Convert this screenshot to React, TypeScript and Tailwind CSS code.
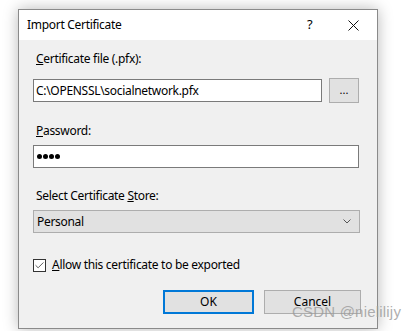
import { Check } from 'lucide-react';

const font = { fontFamily: '"Noto Sans", "Open Sans", sans-serif' };

function Label({ children }: { children: React.ReactNode }) {
  return <div className="h-4 leading-4 text-[12px] tracking-[-0.3px] text-black">{children}</div>;
}

export default function App() {
  return (
    <div className="relative w-[408px] h-[331px] bg-white overflow-hidden" style={font}>
      {/* dialog */}
      <div className="ml-[18px] mt-[9px] w-[360px] h-[320px] border border-[#8a8a8a] shadow-[0_0_14px_rgba(0,0,0,0.28)] flex flex-col bg-[#f0f0f0]">
        {/* title bar */}
        <div className="h-[30px] bg-white flex items-center pl-[8px] shrink-0">
          <span className="text-[12px] tracking-[-0.3px] text-black flex-1">Import Certificate</span>
          <span className="text-[13px] text-black w-[10px] mr-[31px]">?</span>
          <svg width="11" height="11" viewBox="0 0 11 11" className="mr-[18px]">
            <path d="M0.5 0.5 L10.5 10.5 M10.5 0.5 L0.5 10.5" stroke="#111" strokeWidth="1" />
          </svg>
        </div>

        {/* body */}
        <div className="flex-1 flex flex-col pl-[14px] pr-[18px]">
          <div className="mt-[11px] pl-[3px]">
            <Label><u>C</u>ertificate file (.pfx):</Label>
          </div>
          <div className="mt-[11px] flex items-center gap-[7px]">
            <div className="w-[290px] h-[23px] bg-white border border-[#7a7a7a] flex items-center pl-[2px] text-[12px] tracking-[-0.3px] text-black">
              C:\OPENSSL\socialnetwork.pfx
            </div>
            <div className="w-[30px] h-[25px] bg-[#e1e1e1] border border-[#adadad] flex items-center justify-center text-[11px] text-black leading-none pb-[2px]">
              ...
            </div>
          </div>

          <div className="mt-[20px] pl-[3px]">
            <Label><u>P</u>assword:</Label>
          </div>
          <div className="mt-[6px] w-[326px] h-[23px] bg-white border border-[#7a7a7a] flex items-center pl-[3px] gap-[1px]">
            <span className="w-[5px] h-[5px] rounded-full bg-black" />
            <span className="w-[5px] h-[5px] rounded-full bg-black" />
            <span className="w-[5px] h-[5px] rounded-full bg-black" />
            <span className="w-[5px] h-[5px] rounded-full bg-black" />
          </div>

          <div className="mt-[20px] pl-[3px]">
            <Label>Select Certificate <u>S</u>tore:</Label>
          </div>
          <div className="mt-[6px] w-[327px] h-[23px] bg-[#e1e1e1] border border-[#adadad] flex items-center justify-between pl-[3px] pr-[8px] text-[12px] tracking-[-0.3px] text-black">
            <span>Personal</span>
            <svg width="8" height="5" viewBox="0 0 8 5">
              <path d="M0.5 0.5 L4 4 L7.5 0.5" stroke="#555" strokeWidth="1" fill="none" />
            </svg>
          </div>

          <div className="mt-[24px] flex items-center gap-[6px] h-4">
            <div className="w-[13px] h-[13px] border border-[#333] bg-white flex items-center justify-center">
              <Check className="w-[11px] h-[11px] text-[#222]" strokeWidth={1.6} />
            </div>
            <span className="text-[12px] tracking-[-0.3px] text-black"><u>A</u>llow this certificate to be exported</span>
          </div>

          <div className="mt-[17px] flex justify-end gap-[10px]">
            <div className="w-[91px] h-[24px] bg-[#e1e1e1] border-2 border-[#0078d7] flex items-center justify-center text-[12px] text-black">
              OK
            </div>
            <div className="w-[97px] h-[24px] bg-[#e1e1e1] border border-[#adadad] flex items-center justify-center text-[12px] text-black -mr-[2px]">
              Cancel
            </div>
          </div>
        </div>
      </div>

      {/* watermark */}
      <div className="absolute left-[292px] top-[304px] text-[15px] text-[#9a9a9a]/80 leading-none tracking-[0.2px]" style={{ fontFamily: '"Liberation Sans", Arial, sans-serif' }}>
        CSDN @nielilijy
      </div>
    </div>
  );
}
